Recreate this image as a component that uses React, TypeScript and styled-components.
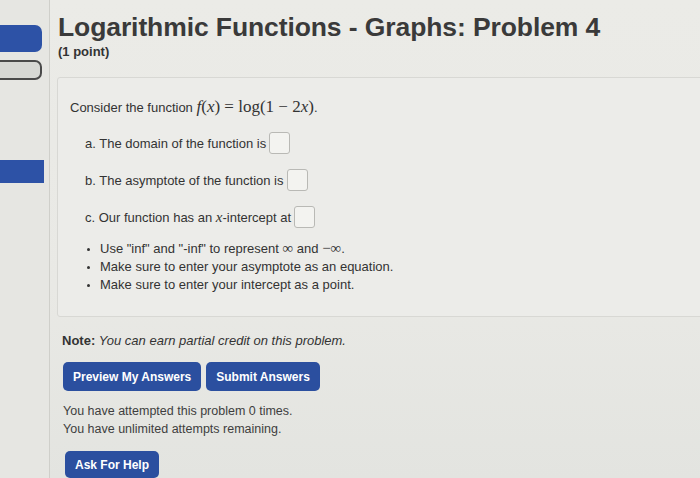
import React from "react";
import styled, { createGlobalStyle } from "styled-components";

const Global = createGlobalStyle`
  html, body { margin: 0; padding: 0; overflow: hidden; }
  body { background: #e9e9e5; font-family: "Liberation Sans", Arial, sans-serif; color: #333; }
`;

const Page = styled.div`
  display: flex;
  width: 700px;
  height: 478px;
  overflow: hidden;
  background: linear-gradient(180deg, #ebebe7 0%, #e9e9e5 60%, #e3e4e0 100%);
`;

const Sidebar = styled.div`
  width: 50px;
  flex: none;
  border-right: 1px solid #cfcfca;
  background: #e6e6e2;
  display: flex;
  flex-direction: column;
  padding-top: 25px;
  box-sizing: border-box;
  overflow: hidden;
`;

const NavPill = styled.div<{ $active?: boolean }>`
  margin-left: -12px;
  width: 54px;
  height: ${(p) => (p.$active ? 27 : 20)}px;
  border-radius: 7px;
  box-sizing: border-box;
  background: ${(p) => (p.$active ? "#2d52a6" : "#d7d8d4")};
  border: ${(p) => (p.$active ? "none" : "2px solid #4a4a4a")};
  margin-bottom: 8px;
`;

const NavBar = styled.div`
  margin-top: 72px;
  width: 44px;
  height: 23px;
  background: #2d52a6;
`;

const Main = styled.div`
  flex: 1;
  padding-left: 7px;
  display: flex;
  flex-direction: column;
  min-width: 0;
`;

const Title = styled.h1`
  margin: 11px 0 0 1px;
  font-size: 26.5px;
  font-weight: 700;
  color: #3a3a3a;
  letter-spacing: -0.1px;
  line-height: 32px;
  white-space: nowrap;
`;

const Points = styled.div`
  font-size: 13px;
  font-weight: 700;
  color: #333;
  margin: 1px 0 0 1px;
  line-height: 16px;
`;

const ProblemBox = styled.div`
  margin-top: 17px;
  margin-right: -20px;
  background: #ecece9;
  border: 1px solid #d8d8d4;
  border-radius: 3px;
  padding: 19px 12px 22px 12px;
  height: 240px;
  box-sizing: border-box;
  font-size: 13px;
  color: #333;
`;

const Intro = styled.p`
  margin: 0;
  line-height: 20px;
`;

const Math = styled.span<{ $size?: number }>`
  font-family: "Liberation Serif", "DejaVu Serif", serif;
  font-size: ${(p) => p.$size ?? 17}px;
`;

const Var = styled.i`
  font-family: "Liberation Serif", "DejaVu Serif", serif;
  font-style: italic;
`;

const Parts = styled.div`
  display: flex;
  flex-direction: column;
  gap: 15px;
  margin: 14px 0 0 15px;
`;

const PartRow = styled.div`
  display: flex;
  align-items: center;
  line-height: 21px;
`;

const AnswerBox = styled.span`
  display: inline-block;
  width: 19px;
  height: 20px;
  margin-left: 3px;
  border: 1px solid #b9b9b5;
  border-radius: 3px;
  background: #f3f3f0;
`;

const Hints = styled.ul`
  margin: 11px 0 0 0;
  padding-left: 30px;
  line-height: 18px;
  list-style: disc;
  li::marker { font-size: 10px; }
`;

const Note = styled.p`
  margin: 15px 0 0 5px;
  font-size: 13px;
  line-height: 18px;
  b { font-weight: 700; }
  i { font-style: italic; }
`;

const ButtonRow = styled.div`
  display: flex;
  gap: 5px;
  margin: 12px 0 0 6px;
`;

const Button = styled.button`
  height: 29px;
  padding: 0 10px;
  border: none;
  border-radius: 5px;
  background: #2b4f9f;
  color: #fff;
  font-family: "Liberation Sans", Arial, sans-serif;
  font-size: 12px;
  font-weight: 700;
`;

const Attempts = styled.div`
  margin: 11px 0 0 6px;
  font-size: 12.5px;
  line-height: 18px;
  color: #3e3e3e;
`;

const HelpButton = styled(Button)`
  margin: 13px 0 0 8px;
  align-self: flex-start;
  height: 30px;
  padding: 0 10px;
`;

export default function App() {
  return (
    <>
      <Global />
      <Page>
        <Sidebar>
          <NavPill $active />
          <NavPill />
          <NavBar />
        </Sidebar>
        <Main>
          <Title>Logarithmic Functions - Graphs: Problem 4</Title>
          <Points>(1 point)</Points>
          <ProblemBox>
            <Intro>
              Consider the function{" "}
              <Math>
                <Var>f</Var>(<Var>x</Var>) = log(1 − 2<Var>x</Var>)
              </Math>
              .
            </Intro>
            <Parts>
              <PartRow>
                a. The domain of the function is <AnswerBox />
              </PartRow>
              <PartRow>
                b. The asymptote of the function is <AnswerBox />
              </PartRow>
              <PartRow>
                c. Our function has an&nbsp;<Math $size={15}><Var>x</Var></Math>-intercept at <AnswerBox />
              </PartRow>
            </Parts>
            <Hints>
              <li>
                Use "inf" and "-inf" to represent <Math $size={15}>∞</Math> and <Math $size={15}>−∞</Math>.
              </li>
              <li>Make sure to enter your asymptote as an equation.</li>
              <li>Make sure to enter your intercept as a point.</li>
            </Hints>
          </ProblemBox>
          <Note>
            <b>Note:</b> <i>You can earn partial credit on this problem.</i>
          </Note>
          <ButtonRow>
            <Button>Preview My Answers</Button>
            <Button>Submit Answers</Button>
          </ButtonRow>
          <Attempts>
            You have attempted this problem 0 times.
            <br />
            You have unlimited attempts remaining.
          </Attempts>
          <HelpButton>Ask For Help</HelpButton>
        </Main>
      </Page>
    </>
  );
}
